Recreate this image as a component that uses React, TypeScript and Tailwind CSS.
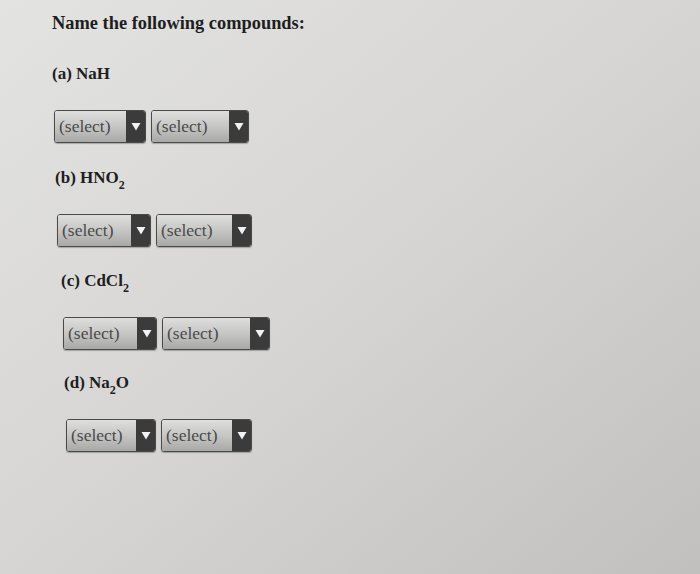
import React from "react"

type Compound = {
  letter: string
  formula: React.ReactNode
  shift: string
  gap: string
  widths: [string, string]
}

const compounds: Compound[] = [
  { letter: "a", formula: <>NaH</>, shift: "ml-0", gap: "mt-[28px]", widths: ["w-[92px]", "w-[98px]"] },
  {
    letter: "b",
    formula: (
      <>
        HNO<sub className="text-[12px] align-[-3px]">2</sub>
      </>
    ),
    shift: "ml-[3px]",
    gap: "mt-[24px]",
    widths: ["w-[94px]", "w-[96px]"],
  },
  {
    letter: "c",
    formula: (
      <>
        CdCl<sub className="text-[12px] align-[-3px]">2</sub>
      </>
    ),
    shift: "ml-[9px]",
    gap: "mt-[23px]",
    widths: ["w-[94px]", "w-[108px]"],
  },
  {
    letter: "d",
    formula: (
      <>
        Na<sub className="text-[12px] align-[-3px]">2</sub>O
      </>
    ),
    shift: "ml-[12px]",
    gap: "mt-[22px]",
    widths: ["w-[90px]", "w-[91px]"],
  },
]

function SelectBox({ width }: { width: string }) {
  return (
    <div
      className={`${width} h-[33px] flex rounded-[3px] border border-[#4a4a4a] overflow-hidden shadow-[0_1px_1px_rgba(0,0,0,0.25)]`}
    >
      <div className="flex-1 flex items-center pl-[4px] bg-gradient-to-b from-[#dededd] via-[#c6c6c5] to-[#a8a8a7] text-[#4a4a4a] text-[17.5px]">
        (select)
      </div>
      <div className="w-[19px] flex items-center justify-center bg-[#3b3b3b]">
        <svg width="10" height="9" viewBox="0 0 10 9">
          <path d="M0.5 1 L9.5 1 L5 8.5 Z" fill="#f2f2f2" />
        </svg>
      </div>
    </div>
  )
}

export default function App() {
  return (
    <div className="w-[700px] h-[574px] overflow-hidden bg-gradient-to-br from-[#e3e3e2] via-[#d6d5d4] to-[#c2c0bf] font-['Liberation_Serif',serif] text-[#1e1e1e]">
      <div className="pl-[52px] pt-[11px]">
        <h1 className="text-[18.4px] font-bold leading-[24px]">Name the following compounds:</h1>

        {compounds.map((c) => (
          <div key={c.letter} className={`${c.shift} ${c.gap}`}>
            <div className="text-[17px] font-bold leading-[22px]">
              ({c.letter}) {c.formula}
            </div>
            <div className="mt-[25px] flex gap-[5px] ml-[2px]">
              <SelectBox width={c.widths[0]} />
              <SelectBox width={c.widths[1]} />
            </div>
          </div>
        ))}
      </div>
    </div>
  )
}
